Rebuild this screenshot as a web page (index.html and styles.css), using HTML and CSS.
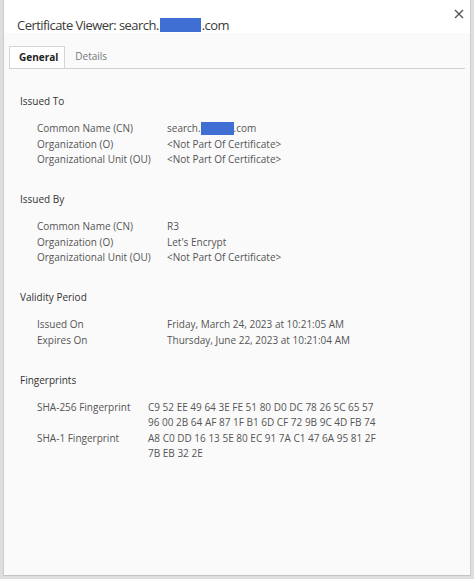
FILE: index.html
```html
<!DOCTYPE html>
<html>
<head>
<meta charset="utf-8">
<link rel="stylesheet" href="styles.css">
</head>
<body>
<div class="dialog">
  <div class="header">
    <div class="title">Certificate Viewer: search.<span class="redact"></span>.com</div>
    <svg class="close" width="10" height="10" viewBox="0 0 10 10"><path d="M1 1 L9 9 M9 1 L1 9" stroke="#555" stroke-width="1.4" fill="none"/></svg>
  </div>
  <div class="tabbar">
    <div class="tab active">General</div>
    <div class="tab">Details</div>
  </div>
  <div class="content">
    <section class="sec">
      <div class="heading">Issued To</div>
      <div class="rows">
        <div class="label">Common Name (CN)</div><div class="value">search.<span class="redact small"></span>.com</div>
        <div class="label">Organization (O)</div><div class="value">&lt;Not Part Of Certificate&gt;</div>
        <div class="label">Organizational Unit (OU)</div><div class="value">&lt;Not Part Of Certificate&gt;</div>
      </div>
    </section>
    <section class="sec">
      <div class="heading">Issued By</div>
      <div class="rows">
        <div class="label">Common Name (CN)</div><div class="value">R3</div>
        <div class="label">Organization (O)</div><div class="value">Let's Encrypt</div>
        <div class="label">Organizational Unit (OU)</div><div class="value">&lt;Not Part Of Certificate&gt;</div>
      </div>
    </section>
    <section class="sec">
      <div class="heading">Validity Period</div>
      <div class="rows">
        <div class="label">Issued On</div><div class="value">Friday, March 24, 2023 at 10:21:05 AM</div>
        <div class="label">Expires On</div><div class="value">Thursday, June 22, 2023 at 10:21:04 AM</div>
      </div>
    </section>
    <section class="sec">
      <div class="heading">Fingerprints</div>
      <div class="rows fp">
        <div class="label">SHA-256 Fingerprint</div><div class="value">C9 52 EE 49 64 3E FE 51 80 D0 DC 78 26 5C 65 57<br>96 00 2B 64 AF 87 1F B1 6D CF 72 9B 9C 4D FB 74</div>
        <div class="label">SHA-1 Fingerprint</div><div class="value">A8 C0 DD 16 13 5E 80 EC 91 7A C1 47 6A 95 81 2F<br>7B EB 32 2E</div>
      </div>
    </section>
  </div>
</div>
</body>
</html>
```
FILE: styles.css
```css
html, body {
  margin: 0;
  padding: 0;
}
body {
  width: 474px;
  height: 579px;
  overflow: hidden;
  background: #dedede;
  font-family: "Open Sans", "Noto Sans", sans-serif;
  color: #333;
}
.dialog {
  box-sizing: border-box;
  margin: 0 3px 0 3px;
  height: 576px;
  background: #fafafa;
  border-left: 1px solid #cdcdcd;
  border-right: 1px solid #cdcdcd;
  border-bottom: 1px solid #c4c4c4;
  display: flex;
  flex-direction: column;
}
.header {
  height: 33px;
  background: #ffffff;
  display: flex;
  justify-content: space-between;
  align-items: flex-start;
  padding: 0 6px 0 13px;
}
.title {
  font-size: 13px;
  color: #3a3a3a;
  margin-top: 15px;
  line-height: 20px;
  letter-spacing: -0.55px;
}
.redact {
  display: inline-block;
  width: 41px;
  height: 14px;
  background: #3f6fd2;
  vertical-align: -2px;
  margin: 0 1px;
}
.redact.small {
  width: 33px;
  height: 13px;
  vertical-align: -3px;
  margin: 0;
}
.close {
  margin-top: 9px;
}
.tabbar {
  display: flex;
  margin: 13px 5px 0 5px;
  border-bottom: 1px solid #d0d0d0;
  height: 22px;
}
.tab {
  font-size: 10px;
  line-height: 21px;
  padding: 0 10px;
  color: #777;
}
.tab.active {
  background: #ffffff;
  border: 1px solid #d4d4d4;
  border-bottom: none;
  color: #222;
  font-weight: bold;
  margin-bottom: -1px;
  height: 22px;
  box-sizing: border-box;
  line-height: 21px;
  padding: 0 6px 0 9px;
}
.content {
  padding: 25px 0 0 16px;
  font-size: 10px;
  line-height: 15.5px;
}
.sec {
  margin-bottom: 24.5px;
}
.heading {
  color: #333;
  margin-bottom: 11.5px;
}
.rows {
  display: grid;
  grid-template-columns: 130px 1fr;
  padding-left: 17px;
  color: #555;
}
.rows.fp {
  grid-template-columns: 111px 1fr;
}
.value {
  color: #555;
}
```
